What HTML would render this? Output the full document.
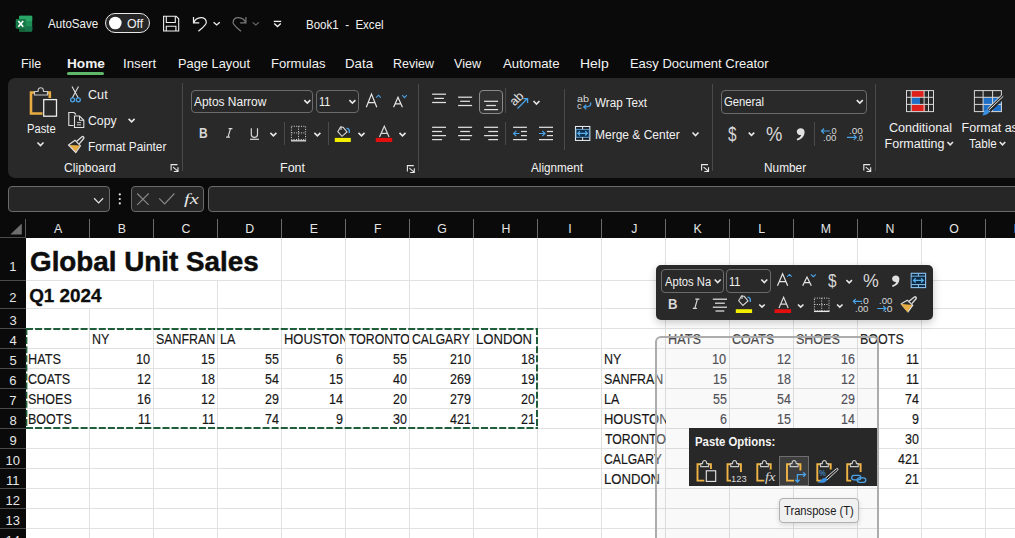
<!DOCTYPE html>
<html><head><meta charset="utf-8">
<style>
html,body{margin:0;padding:0;width:1015px;height:538px;overflow:hidden;background:#0a0a0a;}
body{position:relative;font-family:"Liberation Sans",sans-serif;}
.t{position:absolute;white-space:nowrap;transform-origin:0 0;}
svg{position:absolute;overflow:visible}
</style></head><body>
<div style="position:absolute;left:0px;top:0px;width:1015px;height:538px;background:#0a0a0a"></div>
<div style="position:absolute;left:8px;top:78px;width:1100px;height:100px;background:#292929;border-radius:7px"></div>
<div class="t" style="left:48.20px;top:17.00px;font-size:13px;line-height:13px;color:#f2f2f2;transform:scaleX(0.8919);">AutoSave</div>
<div class="t" style="left:306.38px;top:19.00px;font-size:12.5px;line-height:12.5px;color:#f2f2f2;transform:scaleX(0.9233);">Book1&nbsp; -&nbsp; Excel</div>
<div class="t" style="left:21.00px;top:57.00px;font-size:13px;line-height:13px;color:#f2f2f2;transform:scaleX(0.9602);">File</div>
<div class="t" style="left:66.61px;top:57.00px;font-size:13px;line-height:13px;color:#f2f2f2;font-weight:bold;transform:scaleX(1.0476);">Home</div>
<div class="t" style="left:122.80px;top:57.00px;font-size:13px;line-height:13px;color:#f2f2f2;transform:scaleX(1.0214);">Insert</div>
<div class="t" style="left:177.97px;top:57.00px;font-size:13px;line-height:13px;color:#f2f2f2;transform:scaleX(0.9867);">Page Layout</div>
<div class="t" style="left:270.95px;top:57.00px;font-size:13px;line-height:13px;color:#f2f2f2;transform:scaleX(1.0054);">Formulas</div>
<div class="t" style="left:344.94px;top:57.00px;font-size:13px;line-height:13px;color:#f2f2f2;transform:scaleX(1.0206);">Data</div>
<div class="t" style="left:393.00px;top:57.00px;font-size:13px;line-height:13px;color:#f2f2f2;transform:scaleX(0.9615);">Review</div>
<div class="t" style="left:454.00px;top:57.00px;font-size:13px;line-height:13px;color:#f2f2f2;transform:scaleX(0.9660);">View</div>
<div class="t" style="left:503.00px;top:57.00px;font-size:13px;line-height:13px;color:#f2f2f2;transform:scaleX(1.0160);">Automate</div>
<div class="t" style="left:579.88px;top:57.00px;font-size:13px;line-height:13px;color:#f2f2f2;transform:scaleX(1.0733);">Help</div>
<div class="t" style="left:629.96px;top:57.00px;font-size:13px;line-height:13px;color:#f2f2f2;">Easy Document Creator</div>
<div style="position:absolute;left:67px;top:72px;width:37px;height:3px;background:#5fb86a;border-radius:2px"></div>
<div class="t" style="left:26.60px;top:123.00px;font-size:12.5px;line-height:12.5px;color:#f2f2f2;transform:scaleX(0.8969);">Paste</div>
<div class="t" style="left:87.67px;top:89.00px;font-size:12.5px;line-height:12.5px;color:#f2f2f2;transform:scaleX(1.0100);">Cut</div>
<div class="t" style="left:87.99px;top:115.00px;font-size:12.5px;line-height:12.5px;color:#f2f2f2;transform:scaleX(0.9803);">Copy</div>
<div class="t" style="left:87.85px;top:141.00px;font-size:12.5px;line-height:12.5px;color:#f2f2f2;transform:scaleX(0.9485);">Format Painter</div>
<div class="t" style="left:64.09px;top:162.00px;font-size:12.5px;line-height:12.5px;color:#f2f2f2;transform:scaleX(0.9688);">Clipboard</div>
<div class="t" style="left:280.00px;top:162.00px;font-size:12.5px;line-height:12.5px;color:#f2f2f2;">Font</div>
<div class="t" style="left:531.40px;top:162.00px;font-size:12.5px;line-height:12.5px;color:#f2f2f2;transform:scaleX(0.9359);">Alignment</div>
<div class="t" style="left:764.25px;top:162.00px;font-size:12.5px;line-height:12.5px;color:#f2f2f2;transform:scaleX(0.9466);">Number</div>
<div class="t" style="left:595.00px;top:97.00px;font-size:12.5px;line-height:12.5px;color:#f2f2f2;transform:scaleX(0.9327);">Wrap Text</div>
<div class="t" style="left:594.94px;top:129.00px;font-size:12.5px;line-height:12.5px;color:#f2f2f2;transform:scaleX(0.9602);">Merge &amp; Center</div>
<div class="t" style="left:888.67px;top:122.00px;font-size:12.5px;line-height:12.5px;color:#f2f2f2;transform:scaleX(1.0061);">Conditional</div>
<div class="t" style="left:884.60px;top:138.00px;font-size:12.5px;line-height:12.5px;color:#f2f2f2;">Formatting</div>
<div class="t" style="left:961.60px;top:122.00px;font-size:12.5px;line-height:12.5px;color:#f2f2f2;">Format as</div>
<div class="t" style="left:969.17px;top:138.00px;font-size:12.5px;line-height:12.5px;color:#f2f2f2;transform:scaleX(0.9270);">Table</div>
<div style="position:absolute;left:191px;top:90px;width:122px;height:23px;box-sizing:border-box;border:1px solid #6b6b6b;border-radius:4px;background:transparent"></div>
<div class="t" style="left:194.30px;top:96.00px;font-size:12.5px;line-height:12.5px;color:#f2f2f2;transform:scaleX(0.9558);">Aptos Narrow</div>
<div style="position:absolute;left:316px;top:90px;width:43px;height:23px;box-sizing:border-box;border:1px solid #6b6b6b;border-radius:4px;background:transparent"></div>
<div class="t" style="left:319.18px;top:96.00px;font-size:12.5px;line-height:12.5px;color:#f2f2f2;transform:scaleX(0.8743);">11</div>
<div style="position:absolute;left:721px;top:90px;width:146px;height:24px;box-sizing:border-box;border:1px solid #6b6b6b;border-radius:4px;background:transparent"></div>
<div class="t" style="left:724.24px;top:96.00px;font-size:12.5px;line-height:12.5px;color:#f2f2f2;transform:scaleX(0.9010);">General</div>
<div style="position:absolute;left:182px;top:83px;width:1px;height:88px;background:#4a4a4a"></div>
<div style="position:absolute;left:418px;top:84px;width:1px;height:87px;background:#4a4a4a"></div>
<div style="position:absolute;left:712px;top:84px;width:1px;height:87px;background:#4a4a4a"></div>
<div style="position:absolute;left:875px;top:84px;width:1px;height:87px;background:#4a4a4a"></div>
<div style="position:absolute;left:564px;top:89px;width:1px;height:61px;background:#4a4a4a"></div>
<div style="position:absolute;left:505px;top:88px;width:1px;height:25px;background:#4a4a4a"></div>
<div style="position:absolute;left:505px;top:122px;width:1px;height:23px;background:#4a4a4a"></div>
<div style="position:absolute;left:284px;top:122px;width:1px;height:23px;background:#4a4a4a"></div>
<div style="position:absolute;left:328px;top:122px;width:1px;height:23px;background:#4a4a4a"></div>
<div style="position:absolute;left:814px;top:122px;width:1px;height:24px;background:#4a4a4a"></div>
<div style="position:absolute;left:479px;top:90px;width:24px;height:24px;box-sizing:border-box;border:1px solid #8a8a8a;border-radius:4px;background:#303030"></div>
<div style="position:absolute;left:8px;top:186px;width:102px;height:26px;box-sizing:border-box;border:1px solid #6a6a6a;border-radius:4px;background:#262626"></div>
<div style="position:absolute;left:131px;top:186px;width:73px;height:26px;box-sizing:border-box;border:1px solid #6a6a6a;border-radius:4px;background:#262626"></div>
<div style="position:absolute;left:208px;top:186px;width:900px;height:26px;box-sizing:border-box;border:1px solid #6a6a6a;border-radius:4px;background:#262626"></div>
<div style="position:absolute;left:26px;top:238px;width:1000px;height:300px;background:#fff"></div>
<div style="position:absolute;left:89px;top:219px;width:1px;height:19px;background:#6a6a6a"></div>
<div class="t" style="left:53.91px;top:223.00px;font-size:12.3px;line-height:12.3px;color:#e6e6e6;">A</div>
<div style="position:absolute;left:153px;top:219px;width:1px;height:19px;background:#6a6a6a"></div>
<div class="t" style="left:117.73px;top:223.00px;font-size:12.3px;line-height:12.3px;color:#e6e6e6;">B</div>
<div style="position:absolute;left:217px;top:219px;width:1px;height:19px;background:#6a6a6a"></div>
<div class="t" style="left:181.48px;top:223.00px;font-size:12.3px;line-height:12.3px;color:#e6e6e6;">C</div>
<div style="position:absolute;left:281px;top:219px;width:1px;height:19px;background:#6a6a6a"></div>
<div class="t" style="left:245.36px;top:223.00px;font-size:12.3px;line-height:12.3px;color:#e6e6e6;">D</div>
<div style="position:absolute;left:345px;top:219px;width:1px;height:19px;background:#6a6a6a"></div>
<div class="t" style="left:309.66px;top:223.00px;font-size:12.3px;line-height:12.3px;color:#e6e6e6;">E</div>
<div style="position:absolute;left:409px;top:219px;width:1px;height:19px;background:#6a6a6a"></div>
<div class="t" style="left:373.97px;top:223.00px;font-size:12.3px;line-height:12.3px;color:#e6e6e6;">F</div>
<div style="position:absolute;left:473px;top:219px;width:1px;height:19px;background:#6a6a6a"></div>
<div class="t" style="left:437.36px;top:223.00px;font-size:12.3px;line-height:12.3px;color:#e6e6e6;">G</div>
<div style="position:absolute;left:537px;top:219px;width:1px;height:19px;background:#6a6a6a"></div>
<div class="t" style="left:501.54px;top:223.00px;font-size:12.3px;line-height:12.3px;color:#e6e6e6;">H</div>
<div style="position:absolute;left:601px;top:219px;width:1px;height:19px;background:#6a6a6a"></div>
<div class="t" style="left:568.28px;top:223.00px;font-size:12.3px;line-height:12.3px;color:#e6e6e6;">I</div>
<div style="position:absolute;left:665px;top:219px;width:1px;height:19px;background:#6a6a6a"></div>
<div class="t" style="left:631.26px;top:223.00px;font-size:12.3px;line-height:12.3px;color:#e6e6e6;">J</div>
<div style="position:absolute;left:729px;top:219px;width:1px;height:19px;background:#6a6a6a"></div>
<div class="t" style="left:693.45px;top:223.00px;font-size:12.3px;line-height:12.3px;color:#e6e6e6;">K</div>
<div style="position:absolute;left:793px;top:219px;width:1px;height:19px;background:#6a6a6a"></div>
<div class="t" style="left:758.28px;top:223.00px;font-size:12.3px;line-height:12.3px;color:#e6e6e6;">L</div>
<div style="position:absolute;left:857px;top:219px;width:1px;height:19px;background:#6a6a6a"></div>
<div class="t" style="left:820.86px;top:223.00px;font-size:12.3px;line-height:12.3px;color:#e6e6e6;">M</div>
<div style="position:absolute;left:921px;top:219px;width:1px;height:19px;background:#6a6a6a"></div>
<div class="t" style="left:885.54px;top:223.00px;font-size:12.3px;line-height:12.3px;color:#e6e6e6;">N</div>
<div style="position:absolute;left:985px;top:219px;width:1px;height:19px;background:#6a6a6a"></div>
<div class="t" style="left:949.23px;top:223.00px;font-size:12.3px;line-height:12.3px;color:#e6e6e6;">O</div>
<div style="position:absolute;left:1049px;top:219px;width:1px;height:19px;background:#6a6a6a"></div>
<div class="t" style="left:1013.73px;top:223.00px;font-size:12.3px;line-height:12.3px;color:#e6e6e6;">P</div>
<div style="position:absolute;left:0px;top:280px;width:26px;height:1px;background:#4a4a4a"></div>
<div style="position:absolute;left:26px;top:280px;width:1000px;height:1px;background:#e1e1e1"></div>
<div class="t" style="left:9.20px;top:260.00px;font-size:13px;line-height:13px;color:#e6e6e6;">1</div>
<div style="position:absolute;left:0px;top:308px;width:26px;height:1px;background:#4a4a4a"></div>
<div style="position:absolute;left:26px;top:308px;width:1000px;height:1px;background:#e1e1e1"></div>
<div class="t" style="left:9.36px;top:291.00px;font-size:13px;line-height:13px;color:#e6e6e6;">2</div>
<div style="position:absolute;left:0px;top:328px;width:26px;height:1px;background:#4a4a4a"></div>
<div style="position:absolute;left:26px;top:328px;width:1000px;height:1px;background:#e1e1e1"></div>
<div class="t" style="left:9.42px;top:314.00px;font-size:13px;line-height:13px;color:#e6e6e6;">3</div>
<div style="position:absolute;left:0px;top:348px;width:26px;height:1px;background:#4a4a4a"></div>
<div style="position:absolute;left:26px;top:348px;width:1000px;height:1px;background:#e1e1e1"></div>
<div class="t" style="left:9.43px;top:334.00px;font-size:13px;line-height:13px;color:#e6e6e6;">4</div>
<div style="position:absolute;left:0px;top:368px;width:26px;height:1px;background:#4a4a4a"></div>
<div style="position:absolute;left:26px;top:368px;width:1000px;height:1px;background:#e1e1e1"></div>
<div class="t" style="left:9.39px;top:354.00px;font-size:13px;line-height:13px;color:#e6e6e6;">5</div>
<div style="position:absolute;left:0px;top:388px;width:26px;height:1px;background:#4a4a4a"></div>
<div style="position:absolute;left:26px;top:388px;width:1000px;height:1px;background:#e1e1e1"></div>
<div class="t" style="left:9.33px;top:374.00px;font-size:13px;line-height:13px;color:#e6e6e6;">6</div>
<div style="position:absolute;left:0px;top:408px;width:26px;height:1px;background:#4a4a4a"></div>
<div style="position:absolute;left:26px;top:408px;width:1000px;height:1px;background:#e1e1e1"></div>
<div class="t" style="left:9.36px;top:394.00px;font-size:13px;line-height:13px;color:#e6e6e6;">7</div>
<div style="position:absolute;left:0px;top:428px;width:26px;height:1px;background:#4a4a4a"></div>
<div style="position:absolute;left:26px;top:428px;width:1000px;height:1px;background:#e1e1e1"></div>
<div class="t" style="left:9.39px;top:414.00px;font-size:13px;line-height:13px;color:#e6e6e6;">8</div>
<div style="position:absolute;left:0px;top:448px;width:26px;height:1px;background:#4a4a4a"></div>
<div style="position:absolute;left:26px;top:448px;width:1000px;height:1px;background:#e1e1e1"></div>
<div class="t" style="left:9.39px;top:434.00px;font-size:13px;line-height:13px;color:#e6e6e6;">9</div>
<div style="position:absolute;left:0px;top:468px;width:26px;height:1px;background:#4a4a4a"></div>
<div style="position:absolute;left:26px;top:468px;width:1000px;height:1px;background:#e1e1e1"></div>
<div class="t" style="left:5.53px;top:454.00px;font-size:13px;line-height:13px;color:#e6e6e6;">10</div>
<div style="position:absolute;left:0px;top:488px;width:26px;height:1px;background:#4a4a4a"></div>
<div style="position:absolute;left:26px;top:488px;width:1000px;height:1px;background:#e1e1e1"></div>
<div class="t" style="left:6.08px;top:474.00px;font-size:13px;line-height:13px;color:#e6e6e6;">11</div>
<div style="position:absolute;left:0px;top:508px;width:26px;height:1px;background:#4a4a4a"></div>
<div style="position:absolute;left:26px;top:508px;width:1000px;height:1px;background:#e1e1e1"></div>
<div class="t" style="left:5.59px;top:494.00px;font-size:13px;line-height:13px;color:#e6e6e6;">12</div>
<div style="position:absolute;left:0px;top:528px;width:26px;height:1px;background:#4a4a4a"></div>
<div style="position:absolute;left:26px;top:528px;width:1000px;height:1px;background:#e1e1e1"></div>
<div class="t" style="left:5.56px;top:514.00px;font-size:13px;line-height:13px;color:#e6e6e6;">13</div>
<div style="position:absolute;left:0px;top:548px;width:26px;height:1px;background:#4a4a4a"></div>
<div style="position:absolute;left:26px;top:548px;width:1000px;height:1px;background:#e1e1e1"></div>
<div class="t" style="left:5.46px;top:534.00px;font-size:13px;line-height:13px;color:#e6e6e6;">14</div>
<div style="position:absolute;left:89px;top:238px;width:1px;height:300px;background:#e1e1e1"></div>
<div style="position:absolute;left:153px;top:238px;width:1px;height:300px;background:#e1e1e1"></div>
<div style="position:absolute;left:217px;top:238px;width:1px;height:300px;background:#e1e1e1"></div>
<div style="position:absolute;left:281px;top:238px;width:1px;height:300px;background:#e1e1e1"></div>
<div style="position:absolute;left:345px;top:238px;width:1px;height:300px;background:#e1e1e1"></div>
<div style="position:absolute;left:409px;top:238px;width:1px;height:300px;background:#e1e1e1"></div>
<div style="position:absolute;left:473px;top:238px;width:1px;height:300px;background:#e1e1e1"></div>
<div style="position:absolute;left:537px;top:238px;width:1px;height:300px;background:#e1e1e1"></div>
<div style="position:absolute;left:601px;top:238px;width:1px;height:300px;background:#e1e1e1"></div>
<div style="position:absolute;left:665px;top:238px;width:1px;height:300px;background:#e1e1e1"></div>
<div style="position:absolute;left:729px;top:238px;width:1px;height:300px;background:#e1e1e1"></div>
<div style="position:absolute;left:793px;top:238px;width:1px;height:300px;background:#e1e1e1"></div>
<div style="position:absolute;left:857px;top:238px;width:1px;height:300px;background:#e1e1e1"></div>
<div style="position:absolute;left:921px;top:238px;width:1px;height:300px;background:#e1e1e1"></div>
<div style="position:absolute;left:985px;top:238px;width:1px;height:300px;background:#e1e1e1"></div>
<div style="position:absolute;left:1049px;top:238px;width:1px;height:300px;background:#e1e1e1"></div>
<div style="position:absolute;left:26px;top:238px;width:255px;height:42px;background:#fff"></div>
<div style="position:absolute;left:26px;top:281px;width:127px;height:27px;background:#fff"></div>
<div class="t" style="left:29.99px;top:248.00px;font-size:28px;line-height:28px;color:#0d0d0d;font-weight:bold;transform:scaleX(0.9930);-webkit-text-stroke:0.5px #0d0d0d;">Global Unit Sales</div>
<div class="t" style="left:29.15px;top:287.00px;font-size:18.9px;line-height:18.9px;color:#0d0d0d;font-weight:bold;-webkit-text-stroke:0.3px #0d0d0d;">Q1 2024</div>
<div style="position:absolute;left:90px;top:328px;width:63px;height:20px;overflow:hidden">
<div class="t" style="left:1.80px;top:4.00px;font-size:14px;line-height:14px;color:#161616;transform:scaleX(0.8920);-webkit-text-stroke:0.15px currentColor;">NY</div>
</div>
<div style="position:absolute;left:154px;top:328px;width:63px;height:20px;overflow:hidden">
<div class="t" style="left:2.24px;top:4.00px;font-size:14px;line-height:14px;color:#161616;transform:scaleX(0.8854);-webkit-text-stroke:0.15px currentColor;">SANFRAN</div>
</div>
<div style="position:absolute;left:218px;top:328px;width:63px;height:20px;overflow:hidden">
<div class="t" style="left:1.80px;top:4.00px;font-size:14px;line-height:14px;color:#161616;transform:scaleX(0.8920);-webkit-text-stroke:0.15px currentColor;">LA</div>
</div>
<div style="position:absolute;left:282px;top:328px;width:63px;height:20px;overflow:hidden">
<div class="t" style="left:1.76px;top:4.00px;font-size:14px;line-height:14px;color:#161616;transform:scaleX(0.9252);-webkit-text-stroke:0.15px currentColor;">HOUSTON</div>
</div>
<div style="position:absolute;left:346px;top:328px;width:63px;height:20px;overflow:hidden">
<div class="t" style="left:2.55px;top:4.00px;font-size:14px;line-height:14px;color:#161616;transform:scaleX(0.8755);-webkit-text-stroke:0.15px currentColor;">TORONTO</div>
</div>
<div style="position:absolute;left:410px;top:328px;width:63px;height:20px;overflow:hidden">
<div class="t" style="left:2.19px;top:4.00px;font-size:14px;line-height:14px;color:#161616;transform:scaleX(0.8681);-webkit-text-stroke:0.15px currentColor;">CALGARY</div>
</div>
<div style="position:absolute;left:474px;top:328px;width:63px;height:20px;overflow:hidden">
<div class="t" style="left:1.75px;top:4.00px;font-size:14px;line-height:14px;color:#161616;transform:scaleX(0.9362);-webkit-text-stroke:0.15px currentColor;">LONDON</div>
</div>
<div style="position:absolute;left:26px;top:348px;width:63px;height:20px;overflow:hidden">
<div class="t" style="left:1.79px;top:4.00px;font-size:14px;line-height:14px;color:#161616;transform:scaleX(0.9051);-webkit-text-stroke:0.15px currentColor;">HATS</div>
</div>
<div style="position:absolute;left:90px;top:348px;width:63px;height:20px;overflow:hidden">
<div class="t" style="left:46.44px;top:4.00px;font-size:14px;line-height:14px;color:#161616;transform:scaleX(0.9143);-webkit-text-stroke:0.15px currentColor;">10</div>
</div>
<div style="position:absolute;left:154px;top:348px;width:63px;height:20px;overflow:hidden">
<div class="t" style="left:46.84px;top:4.00px;font-size:14px;line-height:14px;color:#161616;transform:scaleX(0.8920);-webkit-text-stroke:0.15px currentColor;">15</div>
</div>
<div style="position:absolute;left:218px;top:348px;width:63px;height:20px;overflow:hidden">
<div class="t" style="left:46.84px;top:4.00px;font-size:14px;line-height:14px;color:#161616;transform:scaleX(0.8920);-webkit-text-stroke:0.15px currentColor;">55</div>
</div>
<div style="position:absolute;left:282px;top:348px;width:63px;height:20px;overflow:hidden">
<div class="t" style="left:53.77px;top:4.00px;font-size:14px;line-height:14px;color:#161616;transform:scaleX(0.8920);-webkit-text-stroke:0.15px currentColor;">6</div>
</div>
<div style="position:absolute;left:346px;top:348px;width:63px;height:20px;overflow:hidden">
<div class="t" style="left:46.84px;top:4.00px;font-size:14px;line-height:14px;color:#161616;transform:scaleX(0.8920);-webkit-text-stroke:0.15px currentColor;">55</div>
</div>
<div style="position:absolute;left:410px;top:348px;width:63px;height:20px;overflow:hidden">
<div class="t" style="left:39.85px;top:4.00px;font-size:14px;line-height:14px;color:#161616;transform:scaleX(0.8920);-webkit-text-stroke:0.15px currentColor;">210</div>
</div>
<div style="position:absolute;left:474px;top:348px;width:63px;height:20px;overflow:hidden">
<div class="t" style="left:46.84px;top:4.00px;font-size:14px;line-height:14px;color:#161616;transform:scaleX(0.8920);-webkit-text-stroke:0.15px currentColor;">18</div>
</div>
<div style="position:absolute;left:26px;top:368px;width:63px;height:20px;overflow:hidden">
<div class="t" style="left:2.18px;top:4.00px;font-size:14px;line-height:14px;color:#161616;transform:scaleX(0.8920);-webkit-text-stroke:0.15px currentColor;">COATS</div>
</div>
<div style="position:absolute;left:90px;top:368px;width:63px;height:20px;overflow:hidden">
<div class="t" style="left:46.90px;top:4.00px;font-size:14px;line-height:14px;color:#161616;transform:scaleX(0.8920);-webkit-text-stroke:0.15px currentColor;">12</div>
</div>
<div style="position:absolute;left:154px;top:368px;width:63px;height:20px;overflow:hidden">
<div class="t" style="left:46.84px;top:4.00px;font-size:14px;line-height:14px;color:#161616;transform:scaleX(0.8920);-webkit-text-stroke:0.15px currentColor;">18</div>
</div>
<div style="position:absolute;left:218px;top:368px;width:63px;height:20px;overflow:hidden">
<div class="t" style="left:46.65px;top:4.00px;font-size:14px;line-height:14px;color:#161616;transform:scaleX(0.8920);-webkit-text-stroke:0.15px currentColor;">54</div>
</div>
<div style="position:absolute;left:282px;top:368px;width:63px;height:20px;overflow:hidden">
<div class="t" style="left:46.84px;top:4.00px;font-size:14px;line-height:14px;color:#161616;transform:scaleX(0.8920);-webkit-text-stroke:0.15px currentColor;">15</div>
</div>
<div style="position:absolute;left:346px;top:368px;width:63px;height:20px;overflow:hidden">
<div class="t" style="left:46.78px;top:4.00px;font-size:14px;line-height:14px;color:#161616;transform:scaleX(0.8920);-webkit-text-stroke:0.15px currentColor;">40</div>
</div>
<div style="position:absolute;left:410px;top:368px;width:63px;height:20px;overflow:hidden">
<div class="t" style="left:39.97px;top:4.00px;font-size:14px;line-height:14px;color:#161616;transform:scaleX(0.8920);-webkit-text-stroke:0.15px currentColor;">269</div>
</div>
<div style="position:absolute;left:474px;top:368px;width:63px;height:20px;overflow:hidden">
<div class="t" style="left:46.90px;top:4.00px;font-size:14px;line-height:14px;color:#161616;transform:scaleX(0.8920);-webkit-text-stroke:0.15px currentColor;">19</div>
</div>
<div style="position:absolute;left:26px;top:388px;width:63px;height:20px;overflow:hidden">
<div class="t" style="left:2.24px;top:4.00px;font-size:14px;line-height:14px;color:#161616;transform:scaleX(0.8920);-webkit-text-stroke:0.15px currentColor;">SHOES</div>
</div>
<div style="position:absolute;left:90px;top:388px;width:63px;height:20px;overflow:hidden">
<div class="t" style="left:46.84px;top:4.00px;font-size:14px;line-height:14px;color:#161616;transform:scaleX(0.8920);-webkit-text-stroke:0.15px currentColor;">16</div>
</div>
<div style="position:absolute;left:154px;top:388px;width:63px;height:20px;overflow:hidden">
<div class="t" style="left:46.90px;top:4.00px;font-size:14px;line-height:14px;color:#161616;transform:scaleX(0.8920);-webkit-text-stroke:0.15px currentColor;">12</div>
</div>
<div style="position:absolute;left:218px;top:388px;width:63px;height:20px;overflow:hidden">
<div class="t" style="left:46.90px;top:4.00px;font-size:14px;line-height:14px;color:#161616;transform:scaleX(0.8920);-webkit-text-stroke:0.15px currentColor;">29</div>
</div>
<div style="position:absolute;left:282px;top:388px;width:63px;height:20px;overflow:hidden">
<div class="t" style="left:46.65px;top:4.00px;font-size:14px;line-height:14px;color:#161616;transform:scaleX(0.8920);-webkit-text-stroke:0.15px currentColor;">14</div>
</div>
<div style="position:absolute;left:346px;top:388px;width:63px;height:20px;overflow:hidden">
<div class="t" style="left:46.78px;top:4.00px;font-size:14px;line-height:14px;color:#161616;transform:scaleX(0.8920);-webkit-text-stroke:0.15px currentColor;">20</div>
</div>
<div style="position:absolute;left:410px;top:388px;width:63px;height:20px;overflow:hidden">
<div class="t" style="left:39.97px;top:4.00px;font-size:14px;line-height:14px;color:#161616;transform:scaleX(0.8920);-webkit-text-stroke:0.15px currentColor;">279</div>
</div>
<div style="position:absolute;left:474px;top:388px;width:63px;height:20px;overflow:hidden">
<div class="t" style="left:46.78px;top:4.00px;font-size:14px;line-height:14px;color:#161616;transform:scaleX(0.8920);-webkit-text-stroke:0.15px currentColor;">20</div>
</div>
<div style="position:absolute;left:26px;top:408px;width:63px;height:20px;overflow:hidden">
<div class="t" style="left:1.80px;top:4.00px;font-size:14px;line-height:14px;color:#161616;transform:scaleX(0.8920);-webkit-text-stroke:0.15px currentColor;">BOOTS</div>
</div>
<div style="position:absolute;left:90px;top:408px;width:63px;height:20px;overflow:hidden">
<div class="t" style="left:47.84px;top:4.00px;font-size:14px;line-height:14px;color:#161616;transform:scaleX(0.8920);-webkit-text-stroke:0.15px currentColor;">11</div>
</div>
<div style="position:absolute;left:154px;top:408px;width:63px;height:20px;overflow:hidden">
<div class="t" style="left:47.84px;top:4.00px;font-size:14px;line-height:14px;color:#161616;transform:scaleX(0.8920);-webkit-text-stroke:0.15px currentColor;">11</div>
</div>
<div style="position:absolute;left:218px;top:408px;width:63px;height:20px;overflow:hidden">
<div class="t" style="left:46.65px;top:4.00px;font-size:14px;line-height:14px;color:#161616;transform:scaleX(0.8920);-webkit-text-stroke:0.15px currentColor;">74</div>
</div>
<div style="position:absolute;left:282px;top:408px;width:63px;height:20px;overflow:hidden">
<div class="t" style="left:53.83px;top:4.00px;font-size:14px;line-height:14px;color:#161616;transform:scaleX(0.8920);-webkit-text-stroke:0.15px currentColor;">9</div>
</div>
<div style="position:absolute;left:346px;top:408px;width:63px;height:20px;overflow:hidden">
<div class="t" style="left:46.78px;top:4.00px;font-size:14px;line-height:14px;color:#161616;transform:scaleX(0.8920);-webkit-text-stroke:0.15px currentColor;">30</div>
</div>
<div style="position:absolute;left:410px;top:408px;width:63px;height:20px;overflow:hidden">
<div class="t" style="left:39.97px;top:4.00px;font-size:14px;line-height:14px;color:#161616;transform:scaleX(0.8920);-webkit-text-stroke:0.15px currentColor;">421</div>
</div>
<div style="position:absolute;left:474px;top:408px;width:63px;height:20px;overflow:hidden">
<div class="t" style="left:46.90px;top:4.00px;font-size:14px;line-height:14px;color:#161616;transform:scaleX(0.8920);-webkit-text-stroke:0.15px currentColor;">21</div>
</div>
<svg style="left:0;top:0" width="1015" height="538"><g stroke="#1e5e3b" stroke-width="2" stroke-dasharray="7 2.1" fill="none"><line x1="26" y1="329" x2="538" y2="329"/><line x1="26" y1="428" x2="538" y2="428"/><line x1="26.6" y1="328" x2="26.6" y2="429" stroke-width="1.6"/><line x1="537" y1="328" x2="537" y2="429"/></g></svg>
<div style="position:absolute;left:656px;top:337px;width:222px;height:201px;background:rgba(0,0,0,0.022)"></div>
<div style="position:absolute;left:602px;top:348px;width:64px;height:20px;overflow:hidden">
<div class="t" style="left:1.80px;top:4.00px;font-size:14px;line-height:14px;color:#161616;transform:scaleX(0.8920);-webkit-text-stroke:0.15px currentColor;">NY</div>
</div>
<div style="position:absolute;left:602px;top:368px;width:64px;height:20px;overflow:hidden">
<div class="t" style="left:2.24px;top:4.00px;font-size:14px;line-height:14px;color:#161616;transform:scaleX(0.8854);-webkit-text-stroke:0.15px currentColor;">SANFRAN</div>
</div>
<div style="position:absolute;left:602px;top:388px;width:64px;height:20px;overflow:hidden">
<div class="t" style="left:1.80px;top:4.00px;font-size:14px;line-height:14px;color:#161616;transform:scaleX(0.8920);-webkit-text-stroke:0.15px currentColor;">LA</div>
</div>
<div style="position:absolute;left:602px;top:408px;width:64px;height:20px;overflow:hidden">
<div class="t" style="left:1.76px;top:4.00px;font-size:14px;line-height:14px;color:#161616;transform:scaleX(0.9252);-webkit-text-stroke:0.15px currentColor;">HOUSTON</div>
</div>
<div style="position:absolute;left:602px;top:428px;width:64px;height:20px;overflow:hidden">
<div class="t" style="left:2.55px;top:4.00px;font-size:14px;line-height:14px;color:#161616;transform:scaleX(0.8755);-webkit-text-stroke:0.15px currentColor;">TORONTO</div>
</div>
<div style="position:absolute;left:602px;top:448px;width:64px;height:20px;overflow:hidden">
<div class="t" style="left:2.19px;top:4.00px;font-size:14px;line-height:14px;color:#161616;transform:scaleX(0.8681);-webkit-text-stroke:0.15px currentColor;">CALGARY</div>
</div>
<div style="position:absolute;left:602px;top:468px;width:64px;height:20px;overflow:hidden">
<div class="t" style="left:1.75px;top:4.00px;font-size:14px;line-height:14px;color:#161616;transform:scaleX(0.9362);-webkit-text-stroke:0.15px currentColor;">LONDON</div>
</div>
<div style="position:absolute;left:666px;top:328px;width:63px;height:20px;overflow:hidden">
<div class="t" style="left:1.79px;top:4.00px;font-size:14px;line-height:14px;color:#4a4a4a;transform:scaleX(0.9051);-webkit-text-stroke:0.15px currentColor;">HATS</div>
</div>
<div style="position:absolute;left:730px;top:328px;width:63px;height:20px;overflow:hidden">
<div class="t" style="left:2.18px;top:4.00px;font-size:14px;line-height:14px;color:#4a4a4a;transform:scaleX(0.8920);-webkit-text-stroke:0.15px currentColor;">COATS</div>
</div>
<div style="position:absolute;left:794px;top:328px;width:63px;height:20px;overflow:hidden">
<div class="t" style="left:2.24px;top:4.00px;font-size:14px;line-height:14px;color:#4a4a4a;transform:scaleX(0.8920);-webkit-text-stroke:0.15px currentColor;">SHOES</div>
</div>
<div style="position:absolute;left:858px;top:328px;width:63px;height:20px;overflow:hidden">
<div class="t" style="left:1.80px;top:4.00px;font-size:14px;line-height:14px;color:#222;transform:scaleX(0.8920);-webkit-text-stroke:0.15px currentColor;">BOOTS</div>
</div>
<div style="position:absolute;left:666px;top:348px;width:63px;height:20px;overflow:hidden">
<div class="t" style="left:46.44px;top:4.00px;font-size:14px;line-height:14px;color:#505058;transform:scaleX(0.9143);-webkit-text-stroke:0.15px currentColor;">10</div>
</div>
<div style="position:absolute;left:730px;top:348px;width:63px;height:20px;overflow:hidden">
<div class="t" style="left:46.90px;top:4.00px;font-size:14px;line-height:14px;color:#505058;transform:scaleX(0.8920);-webkit-text-stroke:0.15px currentColor;">12</div>
</div>
<div style="position:absolute;left:794px;top:348px;width:63px;height:20px;overflow:hidden">
<div class="t" style="left:46.84px;top:4.00px;font-size:14px;line-height:14px;color:#505058;transform:scaleX(0.8920);-webkit-text-stroke:0.15px currentColor;">16</div>
</div>
<div style="position:absolute;left:858px;top:348px;width:63px;height:20px;overflow:hidden">
<div class="t" style="left:47.84px;top:4.00px;font-size:14px;line-height:14px;color:#161616;transform:scaleX(0.8920);-webkit-text-stroke:0.15px currentColor;">11</div>
</div>
<div style="position:absolute;left:666px;top:368px;width:63px;height:20px;overflow:hidden">
<div class="t" style="left:46.84px;top:4.00px;font-size:14px;line-height:14px;color:#505058;transform:scaleX(0.8920);-webkit-text-stroke:0.15px currentColor;">15</div>
</div>
<div style="position:absolute;left:730px;top:368px;width:63px;height:20px;overflow:hidden">
<div class="t" style="left:46.84px;top:4.00px;font-size:14px;line-height:14px;color:#505058;transform:scaleX(0.8920);-webkit-text-stroke:0.15px currentColor;">18</div>
</div>
<div style="position:absolute;left:794px;top:368px;width:63px;height:20px;overflow:hidden">
<div class="t" style="left:46.90px;top:4.00px;font-size:14px;line-height:14px;color:#505058;transform:scaleX(0.8920);-webkit-text-stroke:0.15px currentColor;">12</div>
</div>
<div style="position:absolute;left:858px;top:368px;width:63px;height:20px;overflow:hidden">
<div class="t" style="left:47.84px;top:4.00px;font-size:14px;line-height:14px;color:#161616;transform:scaleX(0.8920);-webkit-text-stroke:0.15px currentColor;">11</div>
</div>
<div style="position:absolute;left:666px;top:388px;width:63px;height:20px;overflow:hidden">
<div class="t" style="left:46.84px;top:4.00px;font-size:14px;line-height:14px;color:#505058;transform:scaleX(0.8920);-webkit-text-stroke:0.15px currentColor;">55</div>
</div>
<div style="position:absolute;left:730px;top:388px;width:63px;height:20px;overflow:hidden">
<div class="t" style="left:46.65px;top:4.00px;font-size:14px;line-height:14px;color:#505058;transform:scaleX(0.8920);-webkit-text-stroke:0.15px currentColor;">54</div>
</div>
<div style="position:absolute;left:794px;top:388px;width:63px;height:20px;overflow:hidden">
<div class="t" style="left:46.90px;top:4.00px;font-size:14px;line-height:14px;color:#505058;transform:scaleX(0.8920);-webkit-text-stroke:0.15px currentColor;">29</div>
</div>
<div style="position:absolute;left:858px;top:388px;width:63px;height:20px;overflow:hidden">
<div class="t" style="left:46.65px;top:4.00px;font-size:14px;line-height:14px;color:#161616;transform:scaleX(0.8920);-webkit-text-stroke:0.15px currentColor;">74</div>
</div>
<div style="position:absolute;left:666px;top:408px;width:63px;height:20px;overflow:hidden">
<div class="t" style="left:53.77px;top:4.00px;font-size:14px;line-height:14px;color:#505058;transform:scaleX(0.8920);-webkit-text-stroke:0.15px currentColor;">6</div>
</div>
<div style="position:absolute;left:730px;top:408px;width:63px;height:20px;overflow:hidden">
<div class="t" style="left:46.84px;top:4.00px;font-size:14px;line-height:14px;color:#505058;transform:scaleX(0.8920);-webkit-text-stroke:0.15px currentColor;">15</div>
</div>
<div style="position:absolute;left:794px;top:408px;width:63px;height:20px;overflow:hidden">
<div class="t" style="left:46.65px;top:4.00px;font-size:14px;line-height:14px;color:#505058;transform:scaleX(0.8920);-webkit-text-stroke:0.15px currentColor;">14</div>
</div>
<div style="position:absolute;left:858px;top:408px;width:63px;height:20px;overflow:hidden">
<div class="t" style="left:53.83px;top:4.00px;font-size:14px;line-height:14px;color:#161616;transform:scaleX(0.8920);-webkit-text-stroke:0.15px currentColor;">9</div>
</div>
<div style="position:absolute;left:858px;top:428px;width:63px;height:20px;overflow:hidden">
<div class="t" style="left:46.78px;top:4.00px;font-size:14px;line-height:14px;color:#161616;transform:scaleX(0.8920);-webkit-text-stroke:0.15px currentColor;">30</div>
</div>
<div style="position:absolute;left:858px;top:448px;width:63px;height:20px;overflow:hidden">
<div class="t" style="left:39.97px;top:4.00px;font-size:14px;line-height:14px;color:#161616;transform:scaleX(0.8920);-webkit-text-stroke:0.15px currentColor;">421</div>
</div>
<div style="position:absolute;left:858px;top:468px;width:63px;height:20px;overflow:hidden">
<div class="t" style="left:46.90px;top:4.00px;font-size:14px;line-height:14px;color:#161616;transform:scaleX(0.8920);-webkit-text-stroke:0.15px currentColor;">21</div>
</div>
<div style="position:absolute;left:657px;top:349px;width:8px;height:140px;background:rgba(255,255,255,0.28)"></div>
<div style="position:absolute;left:655px;top:336px;width:224px;height:220px;box-sizing:border-box;border:2px solid #acacac;border-radius:6px"></div>
<div style="position:absolute;left:656px;top:265px;width:277px;height:55px;background:#292929;border-radius:5px;box-shadow:0 3px 9px rgba(0,0,0,0.22)"></div>
<div style="position:absolute;left:661px;top:269px;width:63px;height:24px;box-sizing:border-box;border:1px solid #6b6b6b;border-radius:4px"></div>
<div style="position:absolute;left:726px;top:269px;width:45px;height:24px;box-sizing:border-box;border:1px solid #6b6b6b;border-radius:4px"></div>
<div style="position:absolute;left:662px;top:270px;width:49px;height:22px;overflow:hidden">
<div class="t" style="left:2.90px;top:6.00px;font-size:12.5px;line-height:12.5px;color:#f2f2f2;transform:scaleX(0.8977);">Aptos Narrow</div>
</div>
<div class="t" style="left:729.18px;top:276.00px;font-size:12.5px;line-height:12.5px;color:#f2f2f2;transform:scaleX(0.8743);">11</div>
<div style="position:absolute;left:689px;top:428px;width:188px;height:58px;background:#282828"></div>
<div class="t" style="left:694.86px;top:436.00px;font-size:12.6px;line-height:12.6px;color:#f5f5f5;font-weight:bold;transform:scaleX(0.9029);">Paste Options:</div>
<div style="position:absolute;left:779px;top:456px;width:30px;height:30px;box-sizing:border-box;border:1px solid #6e6e6e;background:#3d3d3d"></div>
<div style="position:absolute;left:779px;top:498px;width:80px;height:25px;box-sizing:border-box;border:1px solid #b0b0b0;border-radius:4px;background:#f0f0f0;box-shadow:0 2px 5px rgba(0,0,0,0.13)"></div>
<div class="t" style="left:784.18px;top:505.00px;font-size:12.5px;line-height:12.5px;color:#1a1a1a;transform:scaleX(0.8941);">Transpose (T)</div>
<svg style="left:0;top:0" width="1015" height="538" viewBox="0 0 1015 538">
<rect x="19" y="15.7" width="13.2" height="15.9" rx="1" fill="#1f8f58"/>
<rect x="19" y="15.7" width="13.2" height="5.3" rx="1" fill="#2aa568"/>
<rect x="19" y="26.3" width="13.2" height="5.3" rx="1" fill="#17744a"/>
<rect x="19" y="21" width="6" height="10.6" fill="#146238"/>
<rect x="15.7" y="18.9" width="10.2" height="9.9" rx="1" fill="#167a47"/>
<path d="M18.3 21 L23.2 26.8 M23.2 21 L18.3 26.8" stroke="#fff" stroke-width="1.6"/>
<rect x="105.5" y="13.5" width="44" height="19" rx="9.5" fill="#262626" stroke="#e8e8e8" stroke-width="1"/>
<circle cx="115.3" cy="23" r="6.3" fill="#fff"/>
<g fill="none" stroke="#f0f0f0" stroke-width="1.1">
<path d="M163.6 16.3 H176.2 L178.7 18.8 V31 H163.6 Z"/>
<path d="M166.3 16.3 V22.5 H175.3 V16.3"/>
<path d="M166.3 31 V26.2 H175.9 V31"/>
<path d="M193.5 17 V22.8 H199.3" stroke-width="1.2"/>
<path d="M193.8 22.6 C196 16.5 206.5 15.5 206.3 22.5 C206.2 25 204 26.5 198.4 31.3" stroke-width="1.2"/>
<path d="M213.6 22.3 L216.7 25 L219.8 22.3" stroke-width="1.3"/>
</g>
<g fill="none" stroke="#7a7a7a" stroke-width="1.2">
<path d="M245.9 17 V22.8 H240.1"/>
<path d="M245.6 22.6 C243.4 16.5 232.9 15.5 233.1 22.5 C233.2 25 235.4 26.5 241 31.3"/>
<path d="M252.7 22.3 L255.8 25 L258.9 22.3" stroke="#6a6a6a" stroke-width="1.1"/>
</g>
<g fill="none" stroke="#f0f0f0" stroke-width="1.3">
<path d="M273.8 21.4 H281.2"/>
<path d="M274.2 23.6 L277.5 26.6 L280.8 23.6"/>
</g>
</svg>
<div class="t" style="left:127.05px;top:18.00px;font-size:12.5px;line-height:12.5px;color:#f2f2f2;transform:scaleX(0.9851);">Off</div>
<svg style="left:0;top:0" width="1015" height="538" viewBox="0 0 1015 538">
<path d="M36 92.5 H31 V113.5 H42.5" fill="none" stroke="#e8ad42" stroke-width="2.6"/>
<path d="M46 92.5 H49.8 V98" fill="none" stroke="#e8ad42" stroke-width="2.6"/>
<path d="M34.5 95 V91.5 H38 C38 86.5 43.5 86.5 43.5 91.5 H47.5 V95 Z" fill="#292929" stroke="#c8c8c8" stroke-width="1.2"/>
<rect x="43.7" y="99.6" width="12.8" height="16.6" fill="#292929" stroke="#ececec" stroke-width="1.3"/>
<path d="M37.5 142.5 L40.5 145.5 L43.5 142.5" fill="none" stroke="#e8e8e8" stroke-width="1.6"/>
<path d="M72 86.5 L78.3 98 M78.5 86.5 L72.2 98" fill="none" stroke="#e0e0e0" stroke-width="1.1"/>
<circle cx="72.6" cy="99.8" r="2" fill="none" stroke="#4aa3e8" stroke-width="1.3"/>
<circle cx="78.3" cy="99.8" r="2" fill="none" stroke="#4aa3e8" stroke-width="1.3"/>

<path d="M74 112.5 H68.8 V125.5 H73.5" fill="none" stroke="#e0e0e0" stroke-width="1.1"/>
<path d="M74 112.5 L76 114.5" fill="none" stroke="#e0e0e0" stroke-width="1.1"/>
<path d="M74.5 116 H79.5 L83.8 120.3 V127.5 H74.5 Z" fill="none" stroke="#e0e0e0" stroke-width="1.1"/>
<path d="M79.5 116 V120.3 H83.8" fill="none" stroke="#e0e0e0" stroke-width="1"/>
<path d="M77 122.6 H81 M77 124.8 H81" stroke="#e0e0e0" stroke-width="0.9"/>
<path d="M128.6 118.9 L131.6 121.9 L134.6 118.9" fill="none" stroke="#e8e8e8" stroke-width="1.6"/>
<path d="M69 145 L75.5 152.3 L80.2 145.6 Z" fill="#e8ad42"/>
<path d="M68.5 145 L75 140.3 L80.5 145.8 L75.8 152.6 Z" fill="none" stroke="#e0e0e0" stroke-width="1.1"/>
<path d="M76.5 141.5 L82 136.8 C83 136 84.5 137.5 83.7 138.5 L79.2 143.8" fill="none" stroke="#e0e0e0" stroke-width="1.3"/>
<path d="M171.1 170.6 V164.6 H177.5" fill="none" stroke="#e8e8e8" stroke-width="1.1"/><path d="M173.1 167.2 L177.9 171.2 M178.0 167.3 V171.5 H173.8" fill="none" stroke="#e8e8e8" stroke-width="1.1"/><path d="M304.3 100.1 L307.3 103.1 L310.3 100.1" fill="none" stroke="#e8e8e8" stroke-width="1.6"/><path d="M349.4 100.1 L352.4 103.1 L355.4 100.1" fill="none" stroke="#e8e8e8" stroke-width="1.6"/>
<path d="M366.3 107.2 L371.5 94 L376.8 107.2 M368.2 102.6 H374.8" fill="none" stroke="#e6e6e6" stroke-width="1.2"/>
<path d="M376.2 97.7 L378.5 95.2 L380.8 97.7" fill="none" stroke="#4aa3e8" stroke-width="1.1"/>
<path d="M393.6 107.2 L398 97.2 L402.4 107.2 M395.2 103.8 H400.8" fill="none" stroke="#e6e6e6" stroke-width="1.2"/>
<path d="M402.2 95.2 L404.5 97.7 L406.8 95.2" fill="none" stroke="#4aa3e8" stroke-width="1.1"/>
<path d="M251.3 128.2 V134.5 C251.3 138.2 257.5 138.2 257.5 134.5 V128.2" fill="none" stroke="#d8d8d8" stroke-width="1.2"/><path d="M250 139.3 H259" stroke="#d8d8d8" stroke-width="1.2"/><path d="M270.4 132.9 L273.4 135.9 L276.4 132.9" fill="none" stroke="#e8e8e8" stroke-width="1.6"/><rect x="291.4" y="126.3" width="14.2" height="13.2" fill="none" stroke="#d8d8d8" stroke-width="1" stroke-dasharray="1 1.4"/><path d="M298.5 126.3 V139.5 M291.4 132.9 H305.6" fill="none" stroke="#d8d8d8" stroke-width="1" stroke-dasharray="1 1.4"/><path d="M291 140.8 H306.1" stroke="#e6e6e6" stroke-width="1.3"/><path d="M314.4 132.9 L317.4 135.9 L320.4 132.9" fill="none" stroke="#e8e8e8" stroke-width="1.6"/><path d="M340.5 127 L337.8 131.7 L342 136.3 L347 132 L343.2 127.3 Z" fill="none" stroke="#d8d8d8" stroke-width="1.1"/><path d="M341 126.2 V130" stroke="#d8d8d8" stroke-width="1.1"/><path d="M346.5 128.5 C348.5 128 349.8 130 349.3 133" fill="none" stroke="#4aa3e8" stroke-width="1.4"/><rect x="334.8" y="137.9" width="16" height="4.1" fill="#f2ef00"/><path d="M358.5 132.9 L361.5 135.9 L364.5 132.9" fill="none" stroke="#e8e8e8" stroke-width="1.6"/><path d="M379.5 137 L384.3 126.3 L389.1 137 M381.2 133.3 H387.4" fill="none" stroke="#d8d8d8" stroke-width="1.2"/><rect x="375.8" y="137.9" width="16.4" height="4.1" fill="#e30e0e"/><path d="M399.5 132.9 L402.5 135.9 L405.5 132.9" fill="none" stroke="#e8e8e8" stroke-width="1.6"/><path d="M407.40000000000003 171.6 V165.6 H413.8" fill="none" stroke="#e8e8e8" stroke-width="1.1"/><path d="M409.40000000000003 168.2 L414.2 172.2 M414.3 168.3 V172.5 H410.1" fill="none" stroke="#e8e8e8" stroke-width="1.1"/></svg>
<div class="t" style="left:198.72px;top:126.00px;font-size:14px;line-height:14px;color:#d8d8d8;font-weight:bold;transform:scaleX(0.8595);">B</div>
<svg style="left:0;top:0" width="1015" height="538" viewBox="0 0 1015 538"><path d="M228.6 128.6 H232.4 M226.1 137.1 H229.9 M230.5 128.6 L228 137.1" fill="none" stroke="#d8d8d8" stroke-width="1.2"/></svg>
<svg style="left:0;top:0" width="1015" height="538" viewBox="0 0 1015 538"><path d="M432.1 94.2 H446" stroke="#e0e0e0" stroke-width="1.25"/><path d="M434.2 98.4 H443.9" stroke="#e0e0e0" stroke-width="1.25"/><path d="M432.1 102.5 H446" stroke="#e0e0e0" stroke-width="1.25"/><path d="M458.1 97.2 H472.1" stroke="#e0e0e0" stroke-width="1.25"/><path d="M460.2 101.3 H469.9" stroke="#e0e0e0" stroke-width="1.25"/><path d="M458.1 105.5 H472.1" stroke="#e0e0e0" stroke-width="1.25"/><path d="M484.1 101.3 H498.1" stroke="#e0e0e0" stroke-width="1.25"/><path d="M486.2 105.5 H495.9" stroke="#e0e0e0" stroke-width="1.25"/><path d="M484.1 109.6 H498.1" stroke="#e0e0e0" stroke-width="1.25"/><text x="0" y="0" transform="translate(514.6,106.6) rotate(-45)" font-family="Liberation Sans" font-size="12.5" fill="#e0e0e0">ab</text><path d="M517.5 108.5 L527.5 98.5 M523.3 98.6 H527.6 V102.9" fill="none" stroke="#4aa3e8" stroke-width="1.3"/><path d="M533.5 101.0 L536.5 104.0 L539.5 101.0" fill="none" stroke="#e8e8e8" stroke-width="1.6"/><path d="M432.1 127.3 H446" stroke="#e0e0e0" stroke-width="1.25"/><path d="M432.1 131.5 H442.1" stroke="#e0e0e0" stroke-width="1.25"/><path d="M432.1 135.6 H446" stroke="#e0e0e0" stroke-width="1.25"/><path d="M432.1 139.6 H442.1" stroke="#e0e0e0" stroke-width="1.25"/><path d="M458.1 127.3 H472.1" stroke="#e0e0e0" stroke-width="1.25"/><path d="M460.2 131.5 H469.9" stroke="#e0e0e0" stroke-width="1.25"/><path d="M458.1 135.6 H472.1" stroke="#e0e0e0" stroke-width="1.25"/><path d="M460.2 139.6 H469.9" stroke="#e0e0e0" stroke-width="1.25"/><path d="M484.1 127.3 H498.1" stroke="#e0e0e0" stroke-width="1.25"/><path d="M488.3 131.5 H498.1" stroke="#e0e0e0" stroke-width="1.25"/><path d="M484.1 135.6 H498.1" stroke="#e0e0e0" stroke-width="1.25"/><path d="M488.3 139.6 H498.1" stroke="#e0e0e0" stroke-width="1.25"/><path d="M513.1 127.3 H526.9" stroke="#e0e0e0" stroke-width="1.25"/><path d="M521 131.5 H526.9" stroke="#e0e0e0" stroke-width="1.25"/><path d="M521 135.6 H526.9" stroke="#e0e0e0" stroke-width="1.25"/><path d="M513.1 139.6 H526.9" stroke="#e0e0e0" stroke-width="1.25"/><path d="M519.5 133.5 H513.6 M516.3 130.8 L513.6 133.5 L516.3 136.2" fill="none" stroke="#4aa3e8" stroke-width="1.2"/><path d="M539 127.3 H553" stroke="#e0e0e0" stroke-width="1.25"/><path d="M546.9 131.5 H553" stroke="#e0e0e0" stroke-width="1.25"/><path d="M546.9 135.6 H553" stroke="#e0e0e0" stroke-width="1.25"/><path d="M539 139.6 H553" stroke="#e0e0e0" stroke-width="1.25"/><path d="M539 133.5 H545 M542.3 130.8 L545 133.5 L542.3 136.2" fill="none" stroke="#4aa3e8" stroke-width="1.2"/><text x="577" y="101.5" font-family="Liberation Sans" font-size="9.5" fill="#d8d8d8" textLength="12" lengthAdjust="spacingAndGlyphs">ab</text><text x="577" y="108.8" font-family="Liberation Sans" font-size="9.5" fill="#d8d8d8">c</text><path d="M590.5 102.5 C591.5 106 589 107 584 107 M586.3 104.6 L583.8 107 L586.3 109.4" fill="none" stroke="#4aa3e8" stroke-width="1.3"/><rect x="575.5" y="126.5" width="14.3" height="13.9" fill="#101820" stroke="#e8ecf0" stroke-width="1.1"/><rect x="576" y="129.3" width="13.3" height="8" fill="#0d3050" stroke="#7ab4e0" stroke-width="0.9"/><path d="M582.6 126.6 V129.3 M582.6 137.3 V140.4" stroke="#e8ecf0" stroke-width="1"/><path d="M577.8 133.3 H587.4 M580 131.1 L577.8 133.3 L580 135.5 M585.2 131.1 L587.4 133.3 L585.2 135.5" fill="none" stroke="#5ab0e8" stroke-width="1.2"/><path d="M692.5 132.5 L695.5 135.5 L698.5 132.5" fill="none" stroke="#e8e8e8" stroke-width="1.6"/><path d="M701.6 170.6 V164.6 H708" fill="none" stroke="#e8e8e8" stroke-width="1.1"/><path d="M703.6 167.2 L708.4 171.2 M708.5 167.3 V171.5 H704.3" fill="none" stroke="#e8e8e8" stroke-width="1.1"/><path d="M856.8 100.1 L859.8 103.1 L862.8 100.1" fill="none" stroke="#e8e8e8" stroke-width="1.6"/><path d="M748.75 132.6 L751.5 135.4 L754.25 132.6" fill="none" stroke="#e8e8e8" stroke-width="1.6"/><path d="M804.6 131.8 C804.6 136.5 801.5 139.5 797.3 140.6 L796.7 139 C799.3 138 800.8 136.6 801.1 135.1 C798.6 135.3 796.8 133.8 796.8 131.7 C796.8 129.6 798.5 128.2 800.7 128.2 C803 128.2 804.6 129.7 804.6 131.8 Z" fill="#e0e0e0"/><path d="M829.8 131 H821.5 M824 128.5 L821.5 131 L824 133.5" fill="none" stroke="#4aa3e8" stroke-width="1.2"/><path d="M847 137.3 H856.3 M853.8 134.8 L856.3 137.3 L853.8 139.8" fill="none" stroke="#4aa3e8" stroke-width="1.2"/><path d="M863.8000000000001 170.6 V164.6 H870.2" fill="none" stroke="#e8e8e8" stroke-width="1.1"/><path d="M865.8000000000001 167.2 L870.6 171.2 M870.7 167.3 V171.5 H866.5" fill="none" stroke="#e8e8e8" stroke-width="1.1"/><rect x="911.2" y="90.6" width="12.9" height="6.6" fill="#e0201b"/><rect x="911.2" y="104.4" width="14" height="7" fill="#e0201b"/><rect x="911.2" y="97.2" width="8.8" height="7.2" fill="#1e6fc8"/><g fill="none" stroke="#d8d8d8" stroke-width="1"><rect x="906.5" y="90.6" width="27" height="21"/><path d="M911.2 90.6 V111.6 M924.1 90.6 V111.6 M928.5 90.6 V111.6 M906.5 97.3 H933.5 M906.5 104.4 H933.5"/></g><path d="M947.45 142.0 L950.2 144.8 L952.95 142.0" fill="none" stroke="#e8e8e8" stroke-width="1.6"/><rect x="983.1" y="97.3" width="18.5" height="14.5" fill="#1e6fc8"/><g fill="none" stroke="#d8d8d8" stroke-width="1"><rect x="974.4" y="90.6" width="27" height="21"/><path d="M983.1 90.6 V111.6 M992.6 90.6 V111.6 M974.4 97.3 H1001.4 M974.4 104.4 H1001.4"/></g><path d="M1003.5 96.5 L989 110.5" stroke="#292929" stroke-width="4.5"/><path d="M1003.3 96.3 L988.6 110.2 M1001.4 95.2 L987.5 108.8" fill="none" stroke="#e8e8e8" stroke-width="1"/><path d="M988 109.5 C985 109 983.5 112 982.5 115.5 C986.5 115 989.5 113.5 989.5 110.5 Z" fill="#3a8ee0"/><path d="M999.75 142.0 L1002.5 144.8 L1005.25 142.0" fill="none" stroke="#e8e8e8" stroke-width="1.6"/></svg>
<div class="t" style="left:728.45px;top:124.00px;font-size:20px;line-height:20px;color:#d8d8d8;transform:scaleX(0.7664);">$</div>
<div class="t" style="left:765.66px;top:125.00px;font-size:19.5px;line-height:19.5px;color:#d8d8d8;transform:scaleX(0.9443);">%</div>
<div class="t" style="left:829.06px;top:127.00px;font-size:9px;line-height:9px;color:#d8d8d8;transform:scaleX(1.0329);">.0</div>
<div class="t" style="left:823.14px;top:134.00px;font-size:9px;line-height:9px;color:#d8d8d8;transform:scaleX(1.0628);">.00</div>
<div class="t" style="left:848.50px;top:127.00px;font-size:9px;line-height:9px;color:#d8d8d8;transform:scaleX(1.1155);">.00</div>
<div class="t" style="left:856.58px;top:134.00px;font-size:9px;line-height:9px;color:#d8d8d8;transform:scaleX(0.7668);">.0</div>
<svg style="left:0;top:0" width="1015" height="538" viewBox="0 0 1015 538"><path d="M714.7 279.5 L717.7 282.5 L720.7 279.5" fill="none" stroke="#e8e8e8" stroke-width="1.6"/><path d="M761.3 279.5 L764.3 282.5 L767.3 279.5" fill="none" stroke="#e8e8e8" stroke-width="1.6"/><path d="M777.5 285.8 L782.6 273.8 L787.7 285.8 M779.3 281.6 H785.9" fill="none" stroke="#e6e6e6" stroke-width="1.2"/><path d="M787.2 276.6 L789.5 274.4 L791.8 276.6" fill="none" stroke="#4aa3e8" stroke-width="1.1"/><path d="M802.7 285.8 L807 277 L811.3 285.8 M804.2 282.6 H809.8" fill="none" stroke="#e6e6e6" stroke-width="1.2"/><path d="M810.9 274.5 L813.3 276.7 L815.7 274.5" fill="none" stroke="#4aa3e8" stroke-width="1.1"/><path d="M846.45 280.2 L849.2 282.8 L851.95 280.2" fill="none" stroke="#e8e8e8" stroke-width="1.6"/><path d="M899.4 278.8 C899.4 283.2 896.6 286 892.5 287 L892 285.5 C894.4 284.6 895.8 283.3 896.1 281.9 C893.8 282.1 892.1 280.8 892.1 278.8 C892.1 276.8 893.7 275.5 895.8 275.5 C898 275.5 899.4 277 899.4 278.8 Z" fill="#e0e0e0"/><rect x="911.2" y="273.3" width="14.4" height="14.3" fill="#0d2a45" stroke="#8cc4f0" stroke-width="1.1"/><path d="M911.2 276.2 H925.6 M911.2 284.6 H925.6 M918.4 273.3 V276.2 M918.4 284.6 V287.6" stroke="#8cc4f0" stroke-width="1"/><rect x="911.8" y="276.8" width="13.2" height="7.2" fill="#0d2a45"/><path d="M913.5 280.4 H923.3 M915.7 278.3 L913.5 280.4 L915.7 282.5 M921.1 278.3 L923.3 280.4 L921.1 282.5" fill="none" stroke="#5ab0e8" stroke-width="1.2"/><path d="M712.8 299.2 H727" stroke="#e0e0e0" stroke-width="1.25"/><path d="M715 303.2 H724.8" stroke="#e0e0e0" stroke-width="1.25"/><path d="M712.8 307.2 H727" stroke="#e0e0e0" stroke-width="1.25"/><path d="M715.5 311 H724.3" stroke="#e0e0e0" stroke-width="1.25"/><path d="M741.5 296 L738.7 300.8 L742.9 305.4 L748 301 L744.2 296.3 Z" fill="none" stroke="#d8d8d8" stroke-width="1.1"/><path d="M742 295.3 V299" stroke="#d8d8d8" stroke-width="1.1"/><path d="M747.5 297.5 C749.5 297 750.8 299 750.3 302" fill="none" stroke="#4aa3e8" stroke-width="1.4"/><rect x="735.8" y="309.2" width="16.3" height="3.8" fill="#f2ef00"/><path d="M759.25 304.5 L762 307.1 L764.75 304.5" fill="none" stroke="#e8e8e8" stroke-width="1.6"/><path d="M779 307.9 L783.6 297.2 L788.2 307.9 M780.6 304.2 H786.6" fill="none" stroke="#d8d8d8" stroke-width="1.2"/><rect x="774.6" y="309.2" width="16.5" height="3.8" fill="#e30e0e"/><path d="M797.95 304.5 L800.7 307.1 L803.45 304.5" fill="none" stroke="#e8e8e8" stroke-width="1.6"/><rect x="814.4" y="298.1" width="14.6" height="12.8" fill="none" stroke="#d8d8d8" stroke-width="1" stroke-dasharray="1 1.4"/><path d="M821.7 298.1 V310.9 M814.4 304.5 H829" fill="none" stroke="#d8d8d8" stroke-width="1" stroke-dasharray="1 1.4"/><path d="M814 311.4 H829.5" stroke="#e6e6e6" stroke-width="1.3"/><path d="M837.05 304.5 L839.8 307.1 L842.55 304.5" fill="none" stroke="#e8e8e8" stroke-width="1.6"/><path d="M862 301.3 H853.3 M855.8 298.8 L853.3 301.3 L855.8 303.8" fill="none" stroke="#4aa3e8" stroke-width="1.2"/><path d="M877.2 308.5 H885.8 M883.3 306 L885.8 308.5 L883.3 311" fill="none" stroke="#4aa3e8" stroke-width="1.2"/><path d="M901.8 304 L908.3 311.5 L912.8 305 Z" fill="#e8ad42"/><path d="M901.3 303.8 L907.3 300.3 L912.8 305.3 L908 311.9 Z" fill="none" stroke="#e0e0e0" stroke-width="1.1"/><path d="M901.3 303.8 L908 311.9" fill="none" stroke="#e8ad42" stroke-width="1.3"/><path d="M909 301.3 L914.4 297 C915.4 296.2 917 297.7 916.1 298.7 L911.8 303.6" fill="none" stroke="#e0e0e0" stroke-width="1.3"/></svg>
<div class="t" style="left:667.54px;top:296.00px;font-size:15px;line-height:15px;color:#d8d8d8;font-weight:bold;transform:scaleX(0.8780);">B</div>
<svg style="left:0;top:0" width="1015" height="538" viewBox="0 0 1015 538"><path d="M695.3 299.2 H699.4 M692.8 308.4 H696.9 M697.4 299.2 L694.8 308.4" fill="none" stroke="#d8d8d8" stroke-width="1.2"/></svg>
<div class="t" style="left:827.55px;top:271.00px;font-size:19px;line-height:19px;color:#d8d8d8;transform:scaleX(0.8067);">$</div>
<div class="t" style="left:862.88px;top:272.00px;font-size:18.5px;line-height:18.5px;color:#d8d8d8;transform:scaleX(0.9624);">%</div>
<div class="t" style="left:859.86px;top:297.00px;font-size:9px;line-height:9px;color:#d8d8d8;transform:scaleX(1.1581);">.0</div>
<div class="t" style="left:855.13px;top:305.00px;font-size:9px;line-height:9px;color:#d8d8d8;transform:scaleX(1.0716);">.00</div>
<div class="t" style="left:879.14px;top:297.00px;font-size:9px;line-height:9px;color:#d8d8d8;transform:scaleX(1.0628);">.00</div>
<div class="t" style="left:883.87px;top:305.00px;font-size:9px;line-height:9px;color:#d8d8d8;transform:scaleX(1.1424);">.0</div>
<svg style="left:0;top:0" width="1015" height="538" viewBox="0 0 1015 538"><path d="M700.7 464.3 H697.5 V480.6 H704.3" fill="none" stroke="#f0b446" stroke-width="1.9"/><path d="M708.5 464.3 H710.9 V469.1" fill="none" stroke="#f0b446" stroke-width="1.9"/><path d="M700.7 466.6 V463.6 H702.5 C702.5 459.4 706.7 459.4 706.7 463.6 H708.5 V466.6 Z" fill="none" stroke="#c8c8c8" stroke-width="1.1"/><rect x="706.3" y="470.8" width="9.4" height="10.6" fill="#282828" stroke="#e8e8e8" stroke-width="1.1"/><path d="M730.7 464.3 H727.5 V480.6 H731.0" fill="none" stroke="#f0b446" stroke-width="1.9"/><path d="M738.5 464.3 H740.9 V472" fill="none" stroke="#f0b446" stroke-width="1.9"/><path d="M730.7 466.6 V463.6 H732.5 C732.5 459.4 736.7 459.4 736.7 463.6 H738.5 V466.6 Z" fill="none" stroke="#c8c8c8" stroke-width="1.1"/><path d="M760.5 464.3 H757.3 V480.6 H764.3" fill="none" stroke="#f0b446" stroke-width="1.9"/><path d="M768.3 464.3 H770.6999999999999 V469.5" fill="none" stroke="#f0b446" stroke-width="1.9"/><path d="M760.5 466.6 V463.6 H762.3 C762.3 459.4 766.5 459.4 766.5 463.6 H768.3 V466.6 Z" fill="none" stroke="#c8c8c8" stroke-width="1.1"/><path d="M790.2 464.3 H787 V480.6 H794" fill="none" stroke="#f0b446" stroke-width="1.9"/><path d="M798 464.3 H800.4 V470.5" fill="none" stroke="#f0b446" stroke-width="1.9"/><path d="M790.2 466.6 V463.6 H792 C792 459.4 796.2 459.4 796.2 463.6 H798 V466.6 Z" fill="none" stroke="#c8c8c8" stroke-width="1.1"/><path d="M797.4 482 V474.6 H805.5 M803.3 472.4 L805.5 474.6 L803.3 476.8 M795.2 479.8 L797.4 482 L799.6 479.8" fill="none" stroke="#4aa3e8" stroke-width="1.3"/><path d="M820.5 464.3 H817.3 V480.6 H821.3" fill="none" stroke="#f0b446" stroke-width="1.9"/><path d="M828.3 464.3 H830.6999999999999 V469.5" fill="none" stroke="#f0b446" stroke-width="1.9"/><path d="M820.5 466.6 V463.6 H822.3 C822.3 459.4 826.5 459.4 826.5 463.6 H828.3 V466.6 Z" fill="none" stroke="#c8c8c8" stroke-width="1.1"/><path d="M836.3 468.8 C837.5 467.8 838.5 469 837.8 470 L827 480 L825.3 478.3 Z" fill="#262626" stroke="#e0e0e0" stroke-width="1"/><path d="M825.8 477.8 C822 477.5 821.5 481 817.5 482.5 C822 483.5 827 482.5 827.3 479.2 Z" fill="#3a8ee0"/><path d="M850.4000000000001 464.3 H847.2 V480.6 H851.2" fill="none" stroke="#f0b446" stroke-width="1.9"/><path d="M858.2 464.3 H860.6 V472" fill="none" stroke="#f0b446" stroke-width="1.9"/><path d="M850.4000000000001 466.6 V463.6 H852.2 C852.2 459.4 856.4000000000001 459.4 856.4000000000001 463.6 H858.2 V466.6 Z" fill="none" stroke="#c8c8c8" stroke-width="1.1"/><rect x="851.7" y="475.3" width="9.2" height="4.6" rx="2.3" fill="none" stroke="#4aa3e8" stroke-width="1.3"/><rect x="857.2" y="477.8" width="8.6" height="4.6" rx="2.3" fill="none" stroke="#4aa3e8" stroke-width="1.3"/></svg>
<div class="t" style="left:730.80px;top:474.00px;font-size:9.5px;line-height:9.5px;color:#d8d8d8;transform:scaleX(0.9847);">123</div>
<div class="t" style="left:765.15px;top:470.00px;font-size:13px;line-height:13px;color:#d8d8d8;transform:scaleX(1.1159);font-family:'Liberation Serif',serif;font-style:italic;">fx</div>
<div class="t" style="left:819.24px;top:468.00px;font-size:9.5px;line-height:9.5px;color:#4aa3e8;transform:scaleX(0.7959);">%</div>
<svg style="left:0;top:0" width="1015" height="538" viewBox="0 0 1015 538"><path d="M94.1 198.29999999999998 L98.6 202.9 L103.1 198.29999999999998" fill="none" stroke="#e0e0e0" stroke-width="1.3"/><circle cx="119.8" cy="194.4" r="1.1" fill="#e8e8e8"/><circle cx="119.8" cy="199" r="1.1" fill="#e8e8e8"/><circle cx="119.8" cy="203.4" r="1.1" fill="#e8e8e8"/><path d="M137.2 193.5 L148.7 204.8 M148.7 193.5 L137.2 204.8" stroke="#8a8a8a" stroke-width="1.1"/><path d="M159.2 198.4 L164.6 204 L174.4 193.5" fill="none" stroke="#8a8a8a" stroke-width="1.1"/><path d="M10.3 234.4 H21.8 V223.6 Z" fill="#6e6e6e"/></svg>
<div class="t" style="left:183.60px;top:192.00px;font-size:15px;line-height:15px;color:#e6e6e6;transform:scaleX(1.3615);font-family:'Liberation Serif',serif;font-style:italic;">fx</div>
<div style="position:absolute;left:25px;top:219px;width:1px;height:19px;background:#5a5a5a"></div>
<div style="position:absolute;left:0px;top:237px;width:26px;height:1px;background:#4a4a4a"></div>
</body></html>
